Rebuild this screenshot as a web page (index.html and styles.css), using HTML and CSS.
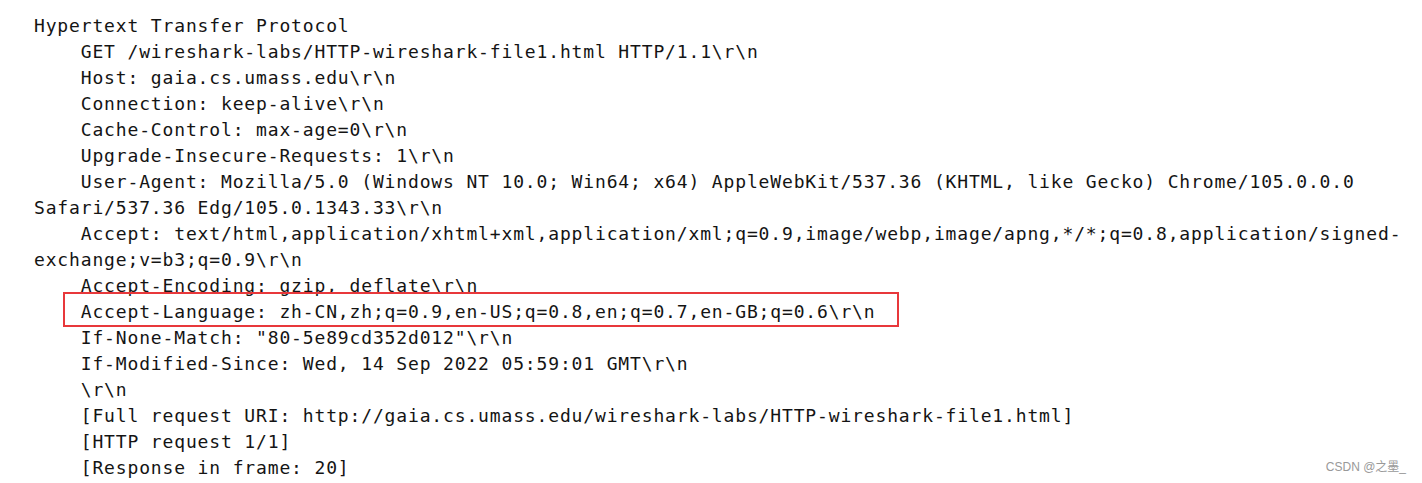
FILE: index.html
```html
<!DOCTYPE html>
<html lang="en">
<head>
<meta charset="utf-8">
<title>HTTP request</title>
<link rel="stylesheet" href="styles.css">
</head>
<body>
<div class="packet">
  <div class="line">Hypertext Transfer Protocol</div>
  <div class="line sub">GET /wireshark-labs/HTTP-wireshark-file1.html HTTP/1.1\r\n</div>
  <div class="line sub">Host: gaia.cs.umass.edu\r\n</div>
  <div class="line sub">Connection: keep-alive\r\n</div>
  <div class="line sub">Cache-Control: max-age=0\r\n</div>
  <div class="line sub">Upgrade-Insecure-Requests: 1\r\n</div>
  <div class="line sub">User-Agent: Mozilla/5.0 (Windows NT 10.0; Win64; x64) AppleWebKit/537.36 (KHTML, like Gecko) Chrome/105.0.0.0<br>Safari/537.36 Edg/105.0.1343.33\r\n</div>
  <div class="line sub">Accept: text/html,application/xhtml+xml,application/xml;q=0.9,image/webp,image/apng,*/*;q=0.8,application/signed-<br>exchange;v=b3;q=0.9\r\n</div>
  <div class="line sub">Accept-Encoding: gzip, deflate\r\n</div>
  <div class="line sub marked">Accept-Language: zh-CN,zh;q=0.9,en-US;q=0.8,en;q=0.7,en-GB;q=0.6\r\n</div>
  <div class="line sub">If-None-Match: "80-5e89cd352d012"\r\n</div>
  <div class="line sub">If-Modified-Since: Wed, 14 Sep 2022 05:59:01 GMT\r\n</div>
  <div class="line sub">\r\n</div>
  <div class="line sub">[Full request URI: http://gaia.cs.umass.edu/wireshark-labs/HTTP-wireshark-file1.html]</div>
  <div class="line sub">[HTTP request 1/1]</div>
  <div class="line sub">[Response in frame: 20]</div>
</div>
<div class="watermark">CSDN @之墨_</div>
</body>
</html>
```
FILE: styles.css
```css
html, body {
  margin: 0;
  padding: 0;
  background: #ffffff;
  width: 1422px;
  height: 483px;
  overflow: hidden;
}

body {
  position: relative;
}

.packet {
  padding: 13px 0 0 34px;
  font-family: "DejaVu Sans Mono", "Liberation Mono", monospace;
  font-size: 18px;
  letter-spacing: 0.85px;
  line-height: 26px;
  color: #141414;
  white-space: nowrap;
}

.line.sub {
  text-indent: 46.75px;
}

.marked {
  position: relative;
}

.marked::before {
  content: "";
  position: absolute;
  left: 29px;
  top: -7px;
  width: 832px;
  height: 31px;
  border: 2px solid #e8383b;
}

.watermark {
  position: absolute;
  right: 16px;
  bottom: 9px;
  font-family: "Liberation Sans", "Noto Sans CJK SC", sans-serif;
  font-size: 12px;
  color: #999999;
}
```
